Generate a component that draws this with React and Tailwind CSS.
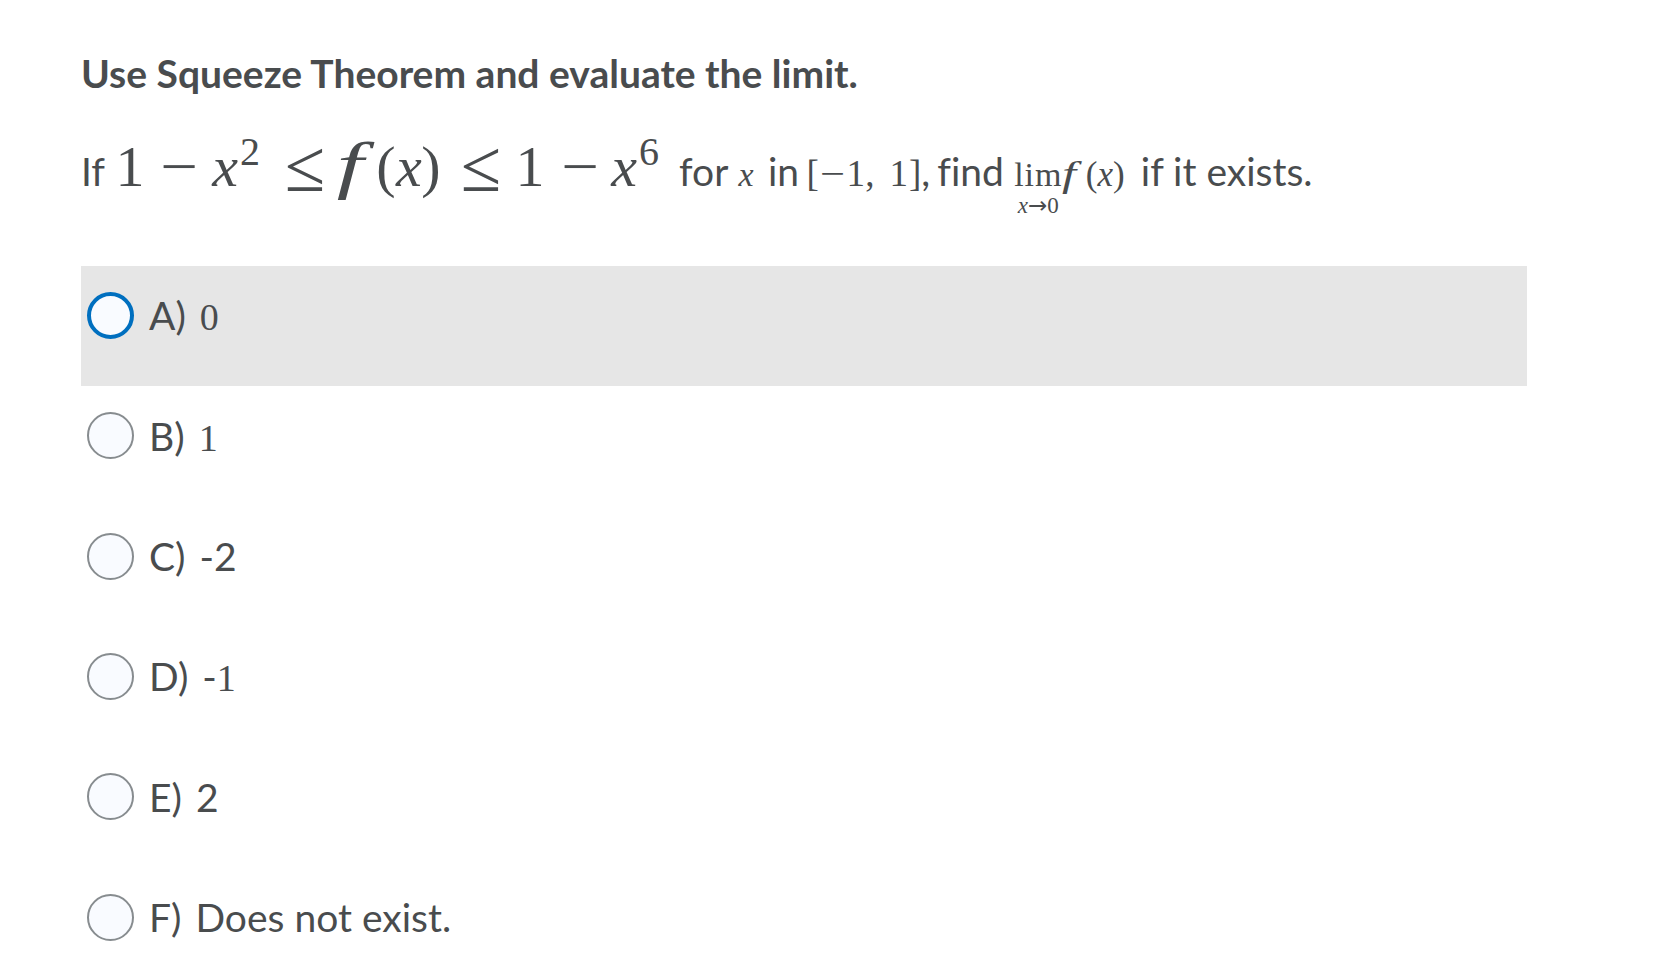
import React from 'react';

const serif = "font-['Liberation_Serif','Times_New_Roman',serif]";

const Radio = ({ selected }) => (
    <span
        className={`ml-[6px] block h-[47px] w-[47px] shrink-0 rounded-full bg-[#f9fbff] ${
            selected ? 'border-[4px] border-[#006fbf]' : 'border-2 border-[#878c8f]'
        }`}
    />
);

const Option = ({ letter, children, selected }) => (
    <div className={`flex h-[120.4px] items-start pt-[26px] ${selected ? 'bg-[#e6e6e6]' : ''}`}>
        <Radio selected={selected} />
        <div className="mt-[1.5px] ml-[15px] text-[39px] leading-[44px]">
            {letter})<span className="ml-[14px]">{children}</span>
        </div>
    </div>
);

const Num = ({ children }) => <span className={`${serif} text-[38px]`}>{children}</span>;

export default function App() {
    return (
        <div className="min-h-screen bg-white pt-[50px] font-['Lato','Noto_Sans',sans-serif] text-[#494c4e] [font-variant-ligatures:none]">
            <div className="ml-[81px] w-[1446px]">
                <h1 className="text-[39px] leading-[1.2] font-bold">Use Squeeze Theorem and evaluate the limit.</h1>

                {/* question line with inline math */}
                <p className="mt-[35.5px] text-[39px] leading-none whitespace-nowrap">
                    <span className="inline-block w-[26px] leading-none">If</span>
                    <span className={`${serif} ml-[8px] inline-block w-[30px] text-center text-[58px] leading-none`}>1</span>
                    <span className={`${serif} ml-[17px] inline-block w-[34px] scale-x-[1.15] text-center text-[58px] leading-none`}>−</span>
                    <span className={`${serif} ml-[16px] inline-block w-[26px] text-center text-[58px] leading-none italic`}>x</span>
                    <span className={`${serif} ml-[2px] inline-block w-[20px] text-center align-[21px] text-[40px] leading-none`}>2</span>
                    <span className={`${serif} ml-[29px] inline-block w-[32px] scale-[1.27] text-center text-[58px] leading-none`}>≤</span>
                    <span className={`${serif} ml-[20px] inline-block w-[18px] scale-x-[1.5] text-center text-[64px] leading-none italic`}>f</span>
                    <span className={`${serif} ml-[17px] inline-block w-[20px] text-center text-[58px] leading-none`}>(</span>
                    <span className={`${serif} inline-block w-[25px] text-center text-[58px] leading-none italic`}>x</span>
                    <span className={`${serif} inline-block w-[20px] text-center text-[58px] leading-none`}>)</span>
                    <span className={`${serif} ml-[23.5px] inline-block w-[32px] scale-[1.27] text-center text-[58px] leading-none`}>≤</span>
                    <span className={`${serif} ml-[18.5px] inline-block w-[30px] text-center text-[58px] leading-none`}>1</span>
                    <span className={`${serif} ml-[17.5px] inline-block w-[34px] scale-x-[1.15] text-center text-[58px] leading-none`}>−</span>
                    <span className={`${serif} ml-[14.5px] inline-block w-[26px] text-center text-[58px] leading-none italic`}>x</span>
                    <span className={`${serif} ml-[2px] inline-block w-[20px] text-center align-[21px] text-[40px] leading-none`}>6</span>
                    <span className="ml-[20px] inline-block w-[49px] leading-none">for</span>
                    <span className={`${serif} ml-[10px] inline-block w-[16px] text-center text-[34px] leading-none italic`}>x</span>
                    <span className="ml-[14px] inline-block w-[24px] leading-none">in</span>
                    <span className={`${serif} ml-[14.5px] inline-block w-[12px] text-center text-[37px] leading-none`}>[</span>
                    <span className={`${serif} ml-[3px] inline-block w-[21px] scale-x-[1.2] text-center text-[37px] leading-none`}>−</span>
                    <span className={`${serif} ml-[4px] inline-block w-[18.5px] text-center text-[37px] leading-none`}>1</span>
                    <span className={`${serif} inline-block w-[9.5px] text-center text-[37px] leading-none`}>,</span>
                    <span className={`${serif} ml-[15px] inline-block w-[18.5px] text-center text-[37px] leading-none`}>1</span>
                    <span className={`${serif} ml-[1px] inline-block w-[12.3px] text-center text-[37px] leading-none`}>]</span>
                    <span className="inline-block w-[8px] leading-none">,</span>
                    <span className="ml-[8px] inline-block w-[66px] leading-none">find</span>
                    <span className={`${serif} ml-[9px] inline-flex w-[52px] flex-col items-center`}>
                        <span className="text-[34px] leading-none tracking-[1px]">lim</span>
                        <span className="mt-[2px] text-[23px] leading-none whitespace-nowrap">
                            <i>x</i>
                            <span className="font-['DejaVu_Sans',sans-serif]">→</span>0
                        </span>
                    </span>
                    <span className={`${serif} ml-0 inline-block w-[10px] scale-x-[1.4] text-center text-[36px] leading-none italic`}>f</span>
                    <span className={`${serif} ml-[11.5px] inline-block w-[38px] text-center text-[35px] leading-none`}>
                        (<i>x</i>)
                    </span>
                    <span className="ml-[17px] inline-block leading-none">if it exists.</span>
                </p>

                <div className="mt-[48.5px]">
                    <Option letter="A" selected>
                        <Num>0</Num>
                    </Option>
                    <Option letter="B">
                        <Num>1</Num>
                    </Option>
                    <Option letter="C">-2</Option>
                    <Option letter="D">
                        -<Num>1</Num>
                    </Option>
                    <Option letter="E">2</Option>
                    <Option letter="F">Does not exist.</Option>
                </div>
            </div>
        </div>
    );
}
